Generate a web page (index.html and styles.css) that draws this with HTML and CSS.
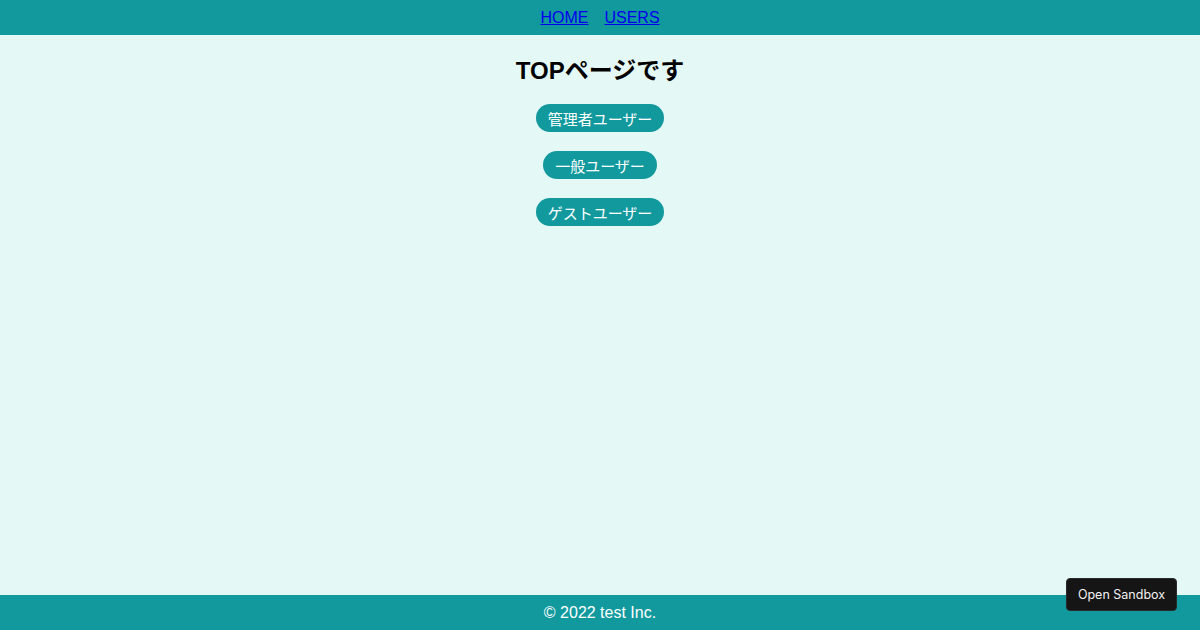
FILE: index.html
```html
<!DOCTYPE html>
<html lang="ja">
<head>
<meta charset="utf-8">
<title>TOP</title>
<link rel="stylesheet" href="styles.css">
</head>
<body>
<div class="page">
  <header class="header">
    <a class="nav-link" href="#">HOME</a>
    <a class="nav-link" href="#">USERS</a>
  </header>
  <main class="main">
    <h1 class="title">TOPページです</h1>
    <div class="buttons">
      <button class="pill">管理者ユーザー</button>
      <button class="pill">一般ユーザー</button>
      <button class="pill">ゲストユーザー</button>
    </div>
  </main>
  <footer class="footer">© 2022 test Inc.</footer>
</div>
<a class="sandbox" href="#">Open Sandbox</a>
</body>
</html>
```
FILE: styles.css
```css
html, body {
  margin: 0;
  padding: 0;
}
body {
  font-family: "Liberation Sans", Arial, "Noto Sans CJK JP", sans-serif;
  background: #e4f9f5;
  color: #000;
}
.page {
  min-height: 100vh;
  display: flex;
  flex-direction: column;
}
.header {
  background: #11999e;
  height: 35px;
  display: flex;
  justify-content: center;
  align-items: center;
  gap: 16px;
  font-size: 16px;
}
.nav-link {
  color: #0000ee;
  text-decoration: underline;
}
.main {
  flex: 1;
  display: flex;
  flex-direction: column;
  align-items: center;
}
.title {
  font-size: 24px;
  font-weight: bold;
  margin: 22px 0 20px;
  line-height: 27px;
}
.buttons {
  display: flex;
  flex-direction: column;
  align-items: center;
  gap: 19px;
}
.pill {
  background: #11999e;
  color: #fff;
  border: none;
  border-radius: 14px;
  height: 28px;
  padding: 0 12px;
  font-family: "Liberation Sans", Arial, "Noto Sans CJK JP", sans-serif;
  font-size: 15px;
  cursor: pointer;
}
.footer {
  background: #11999e;
  color: #fff;
  height: 35px;
  display: flex;
  align-items: center;
  justify-content: center;
  font-size: 16px;
}
.sandbox {
  position: fixed;
  right: 23px;
  bottom: 19px;
  width: 111px;
  height: 33px;
  box-sizing: border-box;
  background: #151515;
  color: #f2f2f2;
  border: 1px solid #2a2a2a;
  border-radius: 4px;
  font-family: Inter, "Liberation Sans", sans-serif;
  font-size: 12.5px;
  display: flex;
  align-items: center;
  justify-content: center;
  text-decoration: none;
}
```
